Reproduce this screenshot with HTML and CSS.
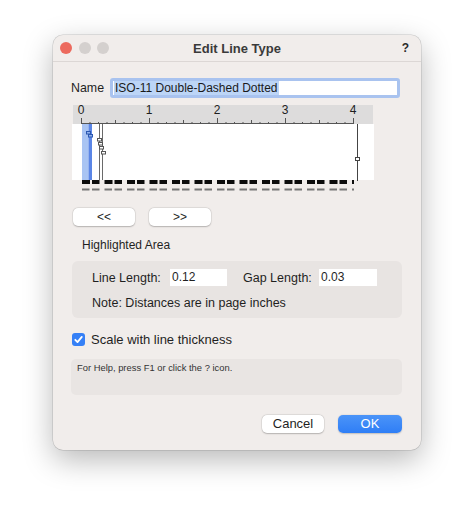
FILE: index.html
```html
<!DOCTYPE html>
<html>
<head>
<meta charset="utf-8">
<link rel="stylesheet" href="styles.css">
</head>
<body>
<div class="window">
  <div class="titlebar">
    <div class="lights"><span class="light red"></span><span class="light"></span><span class="light"></span></div>
    <div class="title">Edit Line Type</div>
    <div class="qmark">?</div>
  </div>
  <div class="content">
    <div class="name-row">
      <span class="name-label">Name</span>
      <div class="name-input"><span class="sel">ISO-11 Double-Dashed Dotted</span></div>
    </div>
    <svg class="preview" width="304" height="94" viewBox="0 0 304 94">
      <rect x="2" y="5" width="300" height="19" fill="#dddcdc"/>
      <g font-family="Liberation Sans, Arial, sans-serif" font-size="12" fill="#1e1e1e" text-anchor="middle">
        <text x="10" y="14">0</text>
        <text x="78" y="14">1</text>
        <text x="146" y="14">2</text>
        <text x="214" y="14">3</text>
        <text x="282" y="14">4</text>
      </g>
      <path d="M10 23.5 H282.5" stroke="#555" stroke-width="1"/>
      <path stroke="#555" stroke-width="1" fill="none" d="M10.5 24v-6 M19 24v-2 M27.5 24v-2 M36 24v-2 M44.5 24v-4 M53 24v-2 M61.5 24v-2 M70 24v-2 M78.5 24v-6 M87 24v-2 M95.5 24v-2 M104 24v-2 M112.5 24v-4 M121 24v-2 M129.5 24v-2 M138 24v-2 M146.5 24v-6 M155 24v-2 M163.5 24v-2 M172 24v-2 M180.5 24v-4 M189 24v-2 M197.5 24v-2 M206 24v-2 M214.5 24v-6 M223 24v-2 M231.5 24v-2 M240 24v-2 M248.5 24v-4 M257 24v-2 M265.5 24v-2 M274 24v-2 M282.5 24v-6"/>
      <rect x="1" y="24" width="302" height="56" fill="#ffffff"/>
      <rect x="11" y="24" width="6.5" height="56" fill="#a9c4f3"/>
      <rect x="17.5" y="24" width="3.5" height="56" fill="#5b86e6"/>
      <rect x="15.5" y="31.5" width="4" height="2.5" fill="#8fb0ec" stroke="#2b57b0" stroke-width="1"/>
      <rect x="17.5" y="34.5" width="4" height="2.5" fill="#8fb0ec" stroke="#2b57b0" stroke-width="1"/>
      <path d="M28.5 24V80 M31.5 24V80" stroke="#6a6a6a" stroke-width="1"/>
      <rect x="26.5" y="38.5" width="4" height="2.5" fill="#fff" stroke="#555" stroke-width="1"/>
      <rect x="27.5" y="42.5" width="4" height="2.5" fill="#fff" stroke="#555" stroke-width="1"/>
      <rect x="28.5" y="46.5" width="4" height="2.5" fill="#fff" stroke="#555" stroke-width="1"/>
      <rect x="30.5" y="51.5" width="4" height="2.5" fill="#fff" stroke="#555" stroke-width="1"/>
      <path d="M286.5 24V81" stroke="#444" stroke-width="1"/>
      <rect x="284.5" y="57.5" width="4" height="3" fill="#fff" stroke="#444" stroke-width="1"/>
      <path d="M11 82H283" stroke="#0d0d0d" stroke-width="4" stroke-dasharray="8 2 7.5 5"/>
      <path d="M11 89.5H283" stroke="#777" stroke-width="2.2" stroke-dasharray="7.5 2.5 7.5 5"/>
    </svg>
    <div class="nav-row">
      <button class="btn nav">&lt;&lt;</button>
      <button class="btn nav">&gt;&gt;</button>
    </div>
    <div class="group-label">Highlighted Area</div>
    <div class="group">
      <div class="len-row">
        <span class="len-label first">Line Length:</span>
        <div class="field w57">0.12</div>
        <span class="len-label second">Gap Length:</span>
        <div class="field w58">0.03</div>
      </div>
      <div class="note">Note: Distances are in page inches</div>
    </div>
    <div class="check-row">
      <span class="checkbox">
        <svg width="13" height="13" viewBox="0 0 13 13"><path d="M3.3 6.8 L5.5 9.1 L9.8 3.9" fill="none" stroke="#fff" stroke-width="1.8" stroke-linecap="round" stroke-linejoin="round"/></svg>
      </span>
      <span class="check-label">Scale with line thickness</span>
    </div>
    <div class="help-box">For Help, press F1 or click the ? icon.</div>
    <div class="actions">
      <button class="btn cancel">Cancel</button>
      <button class="btn ok">OK</button>
    </div>
  </div>
</div>
</body>
</html>
```
FILE: styles.css
```css
html, body {
  margin: 0;
  padding: 0;
  background: #ffffff;
}
body {
  font-family: "Liberation Sans", Arial, sans-serif;
  color: #1f1f1f;
  width: 474px;
  height: 520px;
  overflow: hidden;
}
.window {
  margin: 35px 0 0 53px;
  width: 368px;
  height: 415px;
  background: #f1edeb;
  border-radius: 10px;
  box-shadow: 0 10px 30px rgba(0,0,0,0.28), 0 0 0 0.5px rgba(0,0,0,0.18);
  box-sizing: border-box;
}
.titlebar {
  height: 27px;
  box-sizing: border-box;
  border-bottom: 1px solid #dcd7d5;
  display: grid;
  grid-template-columns: 1fr auto 1fr;
  align-items: center;
}
.lights {
  display: flex;
  gap: 6.5px;
  padding-left: 7px;
}
.light {
  width: 12px;
  height: 12px;
  border-radius: 50%;
  background: #d4d0ce;
}
.light.red {
  background: #ec6a5e;
}
.title {
  font-weight: bold;
  font-size: 13px;
  color: #3a3a3a;
}
.qmark {
  justify-self: end;
  padding-right: 12px;
  font-weight: bold;
  font-size: 12px;
  color: #2a2a2a;
}
.content {
  padding: 0 19px 0 18px;
}
.name-row {
  margin-top: 16px;
  display: flex;
  align-items: center;
  height: 20px;
}
.name-label {
  font-size: 12.4px;
  width: 39px;
}
.name-input {
  width: 290px;
  height: 20px;
  box-sizing: border-box;
  border: 3px solid #a9c3ef;
  border-radius: 3px;
  background: #fff;
  display: flex;
  align-items: stretch;
  padding-left: 1px;
}
.sel {
  background: #bcd5f7;
  font-size: 12px;
  line-height: 14px;
  padding: 0 1px;
  color: #1a1a1a;
}
.preview {
  display: block;
  margin-top: 2px;
}
.nav-row {
  margin-top: 14px;
  display: flex;
  gap: 14px;
  padding-left: 2px;
}
.btn {
  font-family: "Liberation Sans", Arial, sans-serif;
  font-size: 13px;
  height: 18px;
  border: none;
  border-radius: 5px;
  background: #ffffff;
  color: #1f1f1f;
  box-shadow: 0 0.5px 1.5px rgba(0,0,0,0.22), 0 0 0 0.5px rgba(0,0,0,0.08);
  padding: 0;
  line-height: 18px;
}
.nav {
  width: 62px;
  font-size: 12px;
}
.group-label {
  margin-top: 12px;
  padding-left: 11px;
  font-size: 12px;
  line-height: 14px;
}
.group {
  margin: 9px 0 0 1px;
  width: 330px;
  height: 57px;
  box-sizing: border-box;
  background: #e8e4e2;
  border-radius: 6px;
  padding: 8px 0 0 20px;
}
.len-row {
  display: flex;
  align-items: center;
  height: 17px;
  font-size: 12.5px;
}
.len-label.first {
  width: 78px;
}
.len-label.second {
  width: 76px;
  margin-left: 16px;
}
.field {
  height: 17px;
  background: #fff;
  font-size: 12px;
  line-height: 17px;
  padding-left: 2px;
  box-sizing: border-box;
}
.w57 { width: 57px; }
.w58 { width: 58px; }
.note {
  margin-top: 10px;
  font-size: 12.5px;
  line-height: 15px;
}
.check-row {
  margin-top: 15px;
  display: flex;
  align-items: center;
  padding-left: 1px;
  height: 13px;
}
.checkbox {
  width: 13px;
  height: 13px;
  border-radius: 3px;
  background: #3580f6;
  display: block;
}
.checkbox svg {
  display: block;
}
.check-label {
  margin-left: 6px;
  font-size: 13px;
  line-height: 13px;
}
.help-box {
  margin-top: 13px;
  height: 36px;
  box-sizing: border-box;
  background: #e9e5e3;
  border-radius: 5px;
  padding: 3px 0 0 6px;
  font-size: 9.4px;
  line-height: 12px;
  color: #333;
}
.actions {
  margin-top: 20px;
  display: flex;
  justify-content: flex-end;
  gap: 14px;
}
.cancel {
  width: 62px;
}
.ok {
  width: 64px;
  background: linear-gradient(#4b94f8, #2f7ef6);
  color: #fff;
  box-shadow: 0 0.5px 1.5px rgba(0,0,0,0.2);
}
```
